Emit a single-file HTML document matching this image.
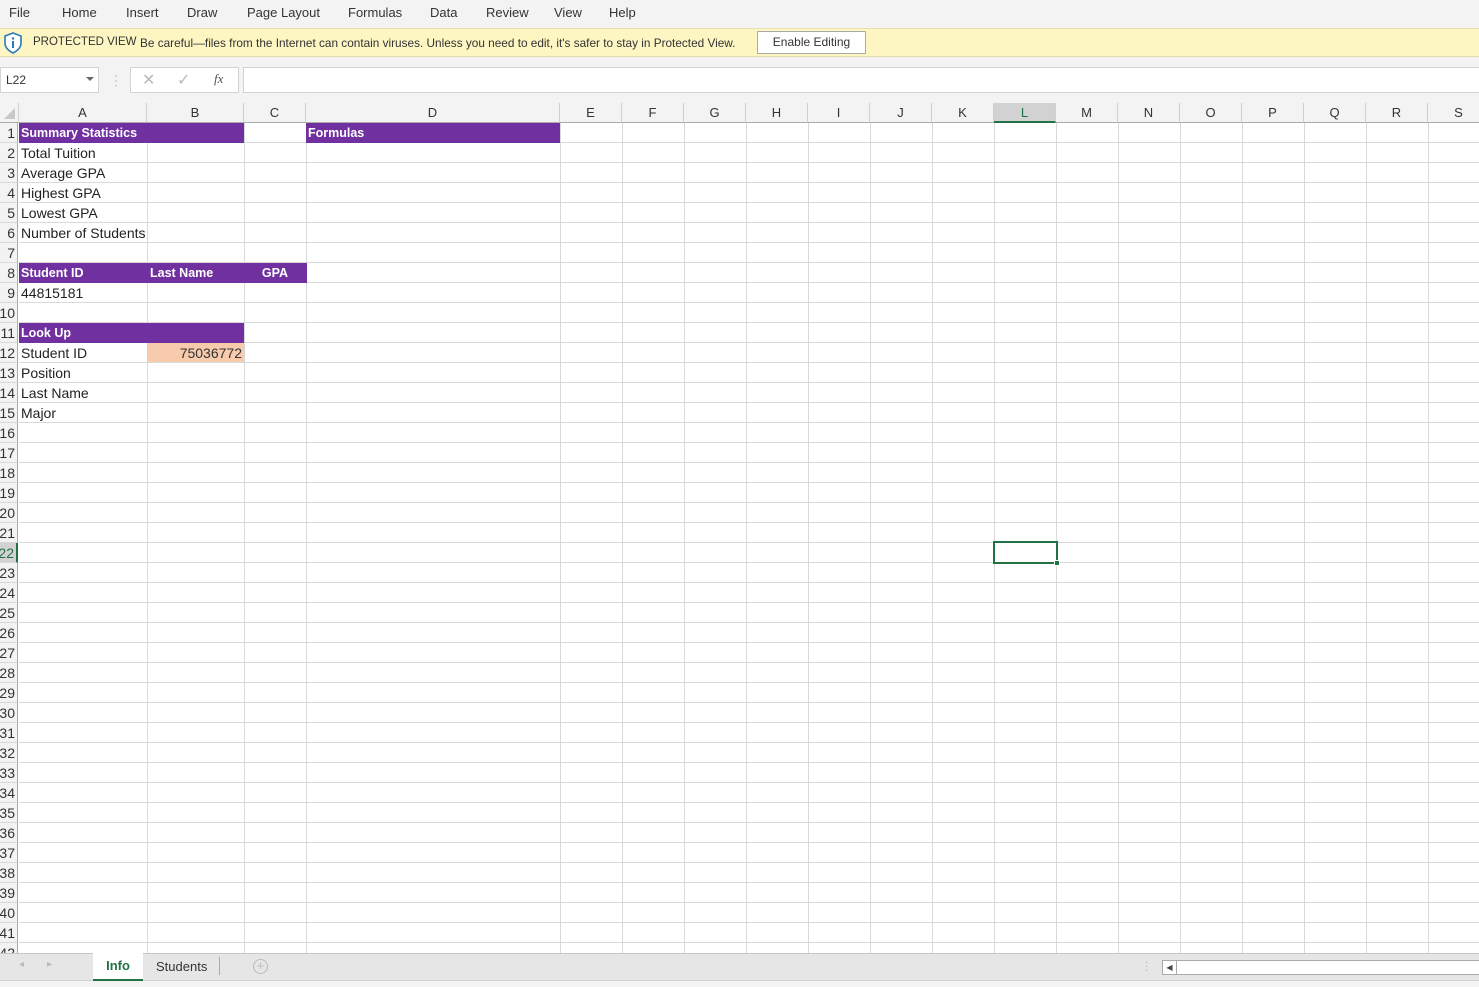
<!DOCTYPE html>
<html><head><meta charset="utf-8">
<style>
*{margin:0;padding:0;box-sizing:border-box}
body{width:1479px;height:987px;position:relative;overflow:hidden;background:#fff;font-family:"Liberation Sans",Arial,sans-serif;color:#222}
.a{position:absolute}
.menu span{position:absolute;top:5px;font-size:13px;color:#333}
.ch{position:absolute;top:103px;height:20px;font-size:13px;color:#333;text-align:center;line-height:19px;border-right:1px solid #d0d0d0;border-bottom:1px solid #ababab;background:#f3f3f3}
.rh{position:absolute;left:0;width:18px;height:20px;font-size:14px;color:#333;line-height:21px;text-align:right;padding-right:2px;overflow:hidden;direction:rtl;background:#f3f3f3;border-bottom:1px solid #d8d8d8;border-right:1px solid #ababab}
.vl{position:absolute;top:123px;height:830px;width:1px;background:#d9d9d9}
.c{position:absolute;height:20px;line-height:21px;font-size:14px;padding-left:2px;white-space:nowrap}
.p{background:#7030a0;color:#fff;font-weight:bold;font-size:12.5px}
</style></head><body>
<div class="a" style="left:0;top:0;width:1479px;height:28px;background:#f3f3f3"></div>
<div class="menu">
<span style="left:9px">File</span><span style="left:62px">Home</span><span style="left:126px">Insert</span><span style="left:187px">Draw</span><span style="left:247px">Page Layout</span><span style="left:348px">Formulas</span><span style="left:430px">Data</span><span style="left:486px">Review</span><span style="left:554px">View</span><span style="left:609px">Help</span>
</div>
<div class="a" style="left:0;top:28px;width:1479px;height:29px;background:#fdf6c3;border-top:1px solid #e6e0b0;border-bottom:1px solid #e0dcb0"></div>
<svg class="a" style="left:3px;top:32px" width="20" height="22" viewBox="0 0 20 22"><path d="M10 1 L18 4 V11 C18 16 14 19 10 21 C6 19 2 16 2 11 V4 Z" fill="#fff" stroke="#2a7ab8" stroke-width="1.6"/><rect x="9" y="9" width="2" height="7" fill="#2a7ab8"/><circle cx="10" cy="6.5" r="1.2" fill="#2a7ab8"/></svg>
<div class="a" style="left:33px;top:36px;font-size:11.5px;color:#333">PROTECTED VIEW</div>
<div class="a" style="left:140px;top:36px;font-size:11.8px;color:#333">Be careful—files from the Internet can contain viruses. Unless you need to edit, it's safer to stay in Protected View.</div>
<div class="a" style="left:757px;top:31px;width:109px;height:23px;background:#fff;border:1px solid #aaa;font-size:12px;line-height:21px;text-align:center;color:#333">Enable Editing</div>
<div class="a" style="left:0;top:57px;width:1479px;height:46px;background:#f3f3f3"></div>
<div class="a" style="left:0;top:67px;width:99px;height:26px;background:#fff;border:1px solid #d4d4d4;font-size:12px;line-height:24px;padding-left:5px;color:#333">L22</div>
<div class="a" style="left:86px;top:77px;width:0;height:0;border-left:4px solid transparent;border-right:4px solid transparent;border-top:4px solid #666"></div>
<div class="a" style="left:114px;top:73px;color:#aaa;font-size:12px;line-height:5px">·<br>·<br>·</div>
<div class="a" style="left:130px;top:67px;width:109px;height:26px;background:#fff;border:1px solid #d4d4d4"></div>
<div class="a" style="left:142px;top:70px;font-size:16px;color:#bbb">✕</div>
<div class="a" style="left:177px;top:70px;font-size:16px;color:#bbb">✓</div>
<div class="a" style="left:214px;top:71px;font-size:13px;font-style:italic;font-family:'Liberation Serif',serif;color:#555">fx</div>
<div class="a" style="left:243px;top:67px;width:1236px;height:26px;background:#fff;border:1px solid #d4d4d4;border-right:none"></div>
<div class="ch" style="left:0;width:19px"></div>
<div class="a" style="left:4px;top:108px;width:0;height:0;border-left:11px solid transparent;border-bottom:11px solid #c8c8c8"></div>
<div class="ch" style="left:19px;width:128px">A</div>
<div class="ch" style="left:147px;width:97px">B</div>
<div class="ch" style="left:244px;width:62px">C</div>
<div class="ch" style="left:306px;width:254px">D</div>
<div class="ch" style="left:560px;width:62px">E</div>
<div class="ch" style="left:622px;width:62px">F</div>
<div class="ch" style="left:684px;width:62px">G</div>
<div class="ch" style="left:746px;width:62px">H</div>
<div class="ch" style="left:808px;width:62px">I</div>
<div class="ch" style="left:870px;width:62px">J</div>
<div class="ch" style="left:932px;width:62px">K</div>
<div class="ch" style="left:994px;width:62px;background:#d2d2d2;border-bottom:2px solid #217346;color:#217346">L</div>
<div class="ch" style="left:1056px;width:62px">M</div>
<div class="ch" style="left:1118px;width:62px">N</div>
<div class="ch" style="left:1180px;width:62px">O</div>
<div class="ch" style="left:1242px;width:62px">P</div>
<div class="ch" style="left:1304px;width:62px">Q</div>
<div class="ch" style="left:1366px;width:62px">R</div>
<div class="ch" style="left:1428px;width:62px">S</div>
<div class="a" style="left:19px;top:123px;width:1460px;height:830px;background:repeating-linear-gradient(to bottom,transparent 0,transparent 19px,#d9d9d9 19px,#d9d9d9 20px)"></div>
<div class="vl" style="left:147px"></div><div class="vl" style="left:244px"></div><div class="vl" style="left:306px"></div><div class="vl" style="left:560px"></div><div class="vl" style="left:622px"></div><div class="vl" style="left:684px"></div><div class="vl" style="left:746px"></div><div class="vl" style="left:808px"></div><div class="vl" style="left:870px"></div><div class="vl" style="left:932px"></div><div class="vl" style="left:994px"></div><div class="vl" style="left:1056px"></div><div class="vl" style="left:1118px"></div><div class="vl" style="left:1180px"></div><div class="vl" style="left:1242px"></div><div class="vl" style="left:1304px"></div><div class="vl" style="left:1366px"></div><div class="vl" style="left:1428px"></div>
<div class="rh" style="top:123px">1</div><div class="rh" style="top:143px">2</div><div class="rh" style="top:163px">3</div><div class="rh" style="top:183px">4</div><div class="rh" style="top:203px">5</div><div class="rh" style="top:223px">6</div><div class="rh" style="top:243px">7</div><div class="rh" style="top:263px">8</div><div class="rh" style="top:283px">9</div><div class="rh" style="top:303px">10</div><div class="rh" style="top:323px">11</div><div class="rh" style="top:343px">12</div><div class="rh" style="top:363px">13</div><div class="rh" style="top:383px">14</div><div class="rh" style="top:403px">15</div><div class="rh" style="top:423px">16</div><div class="rh" style="top:443px">17</div><div class="rh" style="top:463px">18</div><div class="rh" style="top:483px">19</div><div class="rh" style="top:503px">20</div><div class="rh" style="top:523px">21</div><div class="rh" style="top:543px;background:#d2d2d2;color:#217346;border-right:2px solid #217346">22</div><div class="rh" style="top:563px">23</div><div class="rh" style="top:583px">24</div><div class="rh" style="top:603px">25</div><div class="rh" style="top:623px">26</div><div class="rh" style="top:643px">27</div><div class="rh" style="top:663px">28</div><div class="rh" style="top:683px">29</div><div class="rh" style="top:703px">30</div><div class="rh" style="top:723px">31</div><div class="rh" style="top:743px">32</div><div class="rh" style="top:763px">33</div><div class="rh" style="top:783px">34</div><div class="rh" style="top:803px">35</div><div class="rh" style="top:823px">36</div><div class="rh" style="top:843px">37</div><div class="rh" style="top:863px">38</div><div class="rh" style="top:883px">39</div><div class="rh" style="top:903px">40</div><div class="rh" style="top:923px">41</div><div class="rh" style="top:943px">42</div>
<div class="c p" style="left:19px;top:123px;width:225px">Summary Statistics</div>
<div class="c p" style="left:306px;top:123px;width:254px">Formulas</div>
<div class="c" style="left:19px;top:143px">Total Tuition</div>
<div class="c" style="left:19px;top:163px">Average GPA</div>
<div class="c" style="left:19px;top:183px">Highest GPA</div>
<div class="c" style="left:19px;top:203px">Lowest GPA</div>
<div class="c" style="left:19px;top:223px">Number of Students</div>
<div class="c p" style="left:19px;top:263px;width:288px">Student ID</div>
<div class="c p" style="left:147px;top:263px;padding-left:3px;background:none">Last Name</div>
<div class="c p" style="left:244px;top:263px;width:62px;text-align:center;padding:0;background:none">GPA</div>
<div class="c" style="left:19px;top:283px">44815181</div>
<div class="c p" style="left:19px;top:323px;width:225px">Look Up</div>
<div class="c" style="left:19px;top:343px">Student ID</div>
<div class="c" style="left:147px;top:343px;width:97px;height:19px;background:#f8cbad;text-align:right;padding-right:2px;color:#333">75036772</div>
<div class="c" style="left:19px;top:363px">Position</div>
<div class="c" style="left:19px;top:383px">Last Name</div>
<div class="c" style="left:19px;top:403px">Major</div>
<div class="a" style="left:993px;top:541px;width:65px;height:23px;border:2px solid #217346"></div>
<div class="a" style="left:1054px;top:560px;width:6px;height:6px;background:#217346;border:1px solid #fff"></div>
<div class="a" style="left:0;top:953px;width:1479px;height:27px;background:#e6e6e6;border-top:1px solid #c6c6c6"></div>
<div class="a" style="left:0;top:980px;width:1479px;height:7px;background:#f3f3f3;border-top:1px solid #d4d4d4"></div>
<div class="a" style="left:19px;top:959px;font-size:10px;color:#bbb">◂</div>
<div class="a" style="left:47px;top:959px;font-size:10px;color:#bbb">▸</div>
<div class="a" style="left:93px;top:953px;width:50px;height:28px;background:#fff;border-bottom:2px solid #217346;font-size:13px;font-weight:bold;color:#217346;text-align:center;line-height:26px">Info</div>
<div class="a" style="left:156px;top:959px;font-size:13px;color:#333">Students</div>
<div class="a" style="left:219px;top:957px;width:1px;height:18px;background:#aaa"></div>
<div class="a" style="left:253px;top:959px;width:15px;height:15px;border:1px solid #bbb;border-radius:50%;color:#bbb;font-size:13px;line-height:12px;text-align:center">+</div>
<div class="a" style="left:1145px;top:961px;color:#aaa;font-size:10px;line-height:4px">·<br>·<br>·</div>
<div class="a" style="left:1162px;top:960px;width:317px;height:15px;background:#fff;border:1px solid #aaa;border-right:none"></div>
<div class="a" style="left:1162px;top:960px;width:15px;height:15px;border:1px solid #aaa;font-size:8px;line-height:13px;text-align:center;color:#444">◀</div>
</body></html>
